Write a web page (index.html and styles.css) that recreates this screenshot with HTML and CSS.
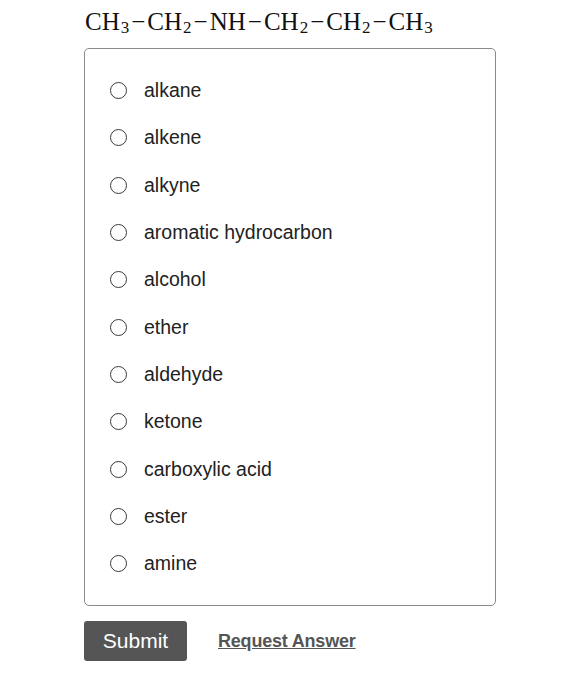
FILE: index.html
```html
<!DOCTYPE html>
<html>
<head>
<meta charset="utf-8">
<link rel="stylesheet" href="styles.css">
</head>
<body>
<div class="page">
  <div class="formula">CH<sub>3</sub><span class="op">−</span>CH<sub>2</sub><span class="op">−</span>NH<span class="op">−</span>CH<sub>2</sub><span class="op">−</span>CH<sub>2</sub><span class="op">−</span>CH<sub>3</sub></div>
  <div class="box">
    <label class="opt"><span class="radio"></span><span class="lbl">alkane</span></label>
    <label class="opt"><span class="radio"></span><span class="lbl">alkene</span></label>
    <label class="opt"><span class="radio"></span><span class="lbl">alkyne</span></label>
    <label class="opt"><span class="radio"></span><span class="lbl">aromatic hydrocarbon</span></label>
    <label class="opt"><span class="radio"></span><span class="lbl">alcohol</span></label>
    <label class="opt"><span class="radio"></span><span class="lbl">ether</span></label>
    <label class="opt"><span class="radio"></span><span class="lbl">aldehyde</span></label>
    <label class="opt"><span class="radio"></span><span class="lbl">ketone</span></label>
    <label class="opt"><span class="radio"></span><span class="lbl">carboxylic acid</span></label>
    <label class="opt"><span class="radio"></span><span class="lbl">ester</span></label>
    <label class="opt"><span class="radio"></span><span class="lbl">amine</span></label>
  </div>
  <div class="actions">
    <button class="submit">Submit</button>
    <a class="request" href="#">Request Answer</a>
  </div>
</div>
</body>
</html>
```
FILE: styles.css
```css
html, body {
  margin: 0;
  padding: 0;
  background: #fff;
}
.page {
  padding: 8px 0 0 84px;
  width: 412px;
  font-family: "Liberation Sans", Arial, sans-serif;
}
.formula {
  font-family: "Liberation Serif", "Times New Roman", serif;
  font-size: 25px;
  line-height: 28px;
  color: #111;
  padding-left: 1px;
  white-space: nowrap;
}
.formula sub {
  font-size: 17px;
  vertical-align: baseline;
  position: relative;
  top: 3px;
  margin-left: 1px;
}
.formula .op {
  margin: 0 2px;
}
.box {
  margin-top: 9px;
  border: 1px solid #8a8a8a;
  border-radius: 5px;
  padding: 18px 0 18px 25px;
}
.opt {
  display: flex;
  align-items: center;
  height: 47.3px;
  cursor: pointer;
}
.radio {
  width: 15px;
  height: 15px;
  border: 1.7px solid #3a3a3a;
  border-radius: 50%;
  box-sizing: content-box;
  flex: none;
}
.lbl {
  margin-left: 17px;
  font-size: 19.5px;
  color: #222;
}
.actions {
  margin-top: 15px;
  display: flex;
  align-items: center;
}
.submit {
  width: 103px;
  height: 40px;
  background: #555;
  color: #fff;
  border: none;
  border-radius: 3px;
  font-family: "Liberation Sans", Arial, sans-serif;
  font-size: 21px;
  padding: 0;
}
.request {
  margin-left: 31px;
  font-size: 18px;
  font-weight: bold;
  color: #555;
  text-decoration: underline;
  letter-spacing: -0.2px;
}
```
